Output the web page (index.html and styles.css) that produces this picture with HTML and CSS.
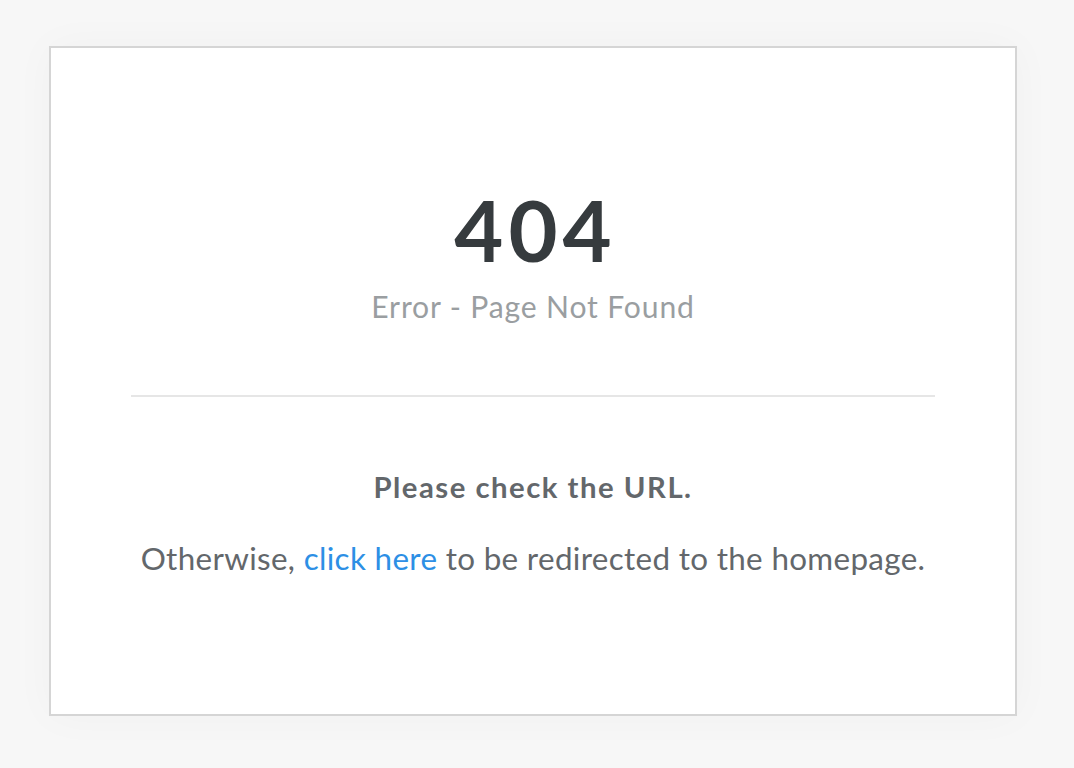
FILE: index.html
```html
<!DOCTYPE html>
<html>
<head>
<meta charset="utf-8">
<link rel="stylesheet" href="styles.css">
</head>
<body>
<div class="card">
  <div class="head">
    <h1 class="code">404</h1>
    <p class="sub">Error - Page Not Found</p>
  </div>
  <hr class="divider">
  <div class="body">
    <p class="check">Please check the URL.</p>
    <p class="other">Otherwise, <a href="#" class="link">click here</a> to be redirected to the homepage.</p>
  </div>
</div>
</body>
</html>
```
FILE: styles.css
```css
html, body {
  margin: 0;
  padding: 0;
}
body {
  background: #f7f7f7;
  font-family: "Lato", "Open Sans", sans-serif;
  width: 1074px;
  height: 768px;
  overflow: hidden;
  padding-top: 46px;
  padding-left: 49px;
  box-sizing: border-box;
}
.card {
  box-sizing: border-box;
  width: 968px;
  height: 670px;
  background: #fff;
  border: 2px solid #d5d5d5;
  box-shadow: 0 0 40px rgba(0,0,0,0.03);
  padding: 131px 80px 0;
  text-align: center;
}
.code {
  margin: 0;
  font-size: 84.7px;
  font-weight: 700;
  color: #363b3e;
  line-height: 100px;
  letter-spacing: 5px;
  text-indent: 5px;
}
.sub {
  margin: 7px 0 0;
  font-size: 30.1px;
  color: #9a9ea1;
  line-height: 40px;
  letter-spacing: 0.85px;
}
.divider {
  border: 0;
  height: 2px;
  background: #e6e6e6;
  margin: 69px 0 0;
}
.check {
  margin: 70px 0 0;
  font-size: 29.3px;
  font-weight: 700;
  color: #63676b;
  line-height: 40px;
  letter-spacing: 1.5px;
}
.other {
  margin: 31px 0 0;
  font-size: 31.4px;
  color: #63676b;
  line-height: 40px;
  letter-spacing: 0.33px;
}
.link {
  color: #2d8fe5;
  text-decoration: none;
}
```
